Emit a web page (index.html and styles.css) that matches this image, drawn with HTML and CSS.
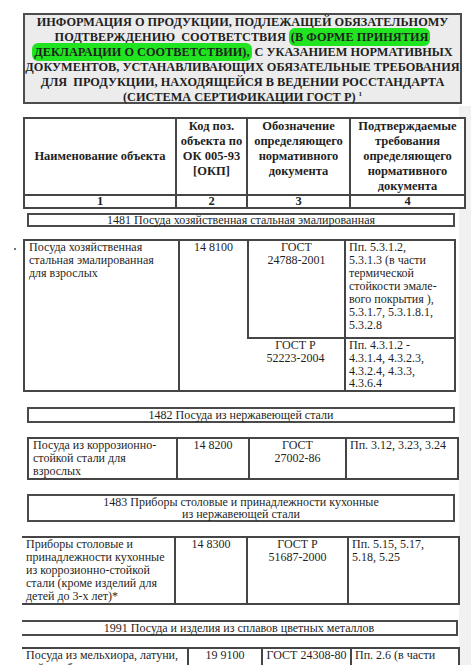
FILE: index.html
```html
<!DOCTYPE html>
<html lang="ru">
<head>
<meta charset="utf-8">
<link rel="stylesheet" href="styles.css">
</head>
<body>
<div class="page">
  <div class="strip"></div>
  <div class="dot"></div>

  <div class="title">
    ИНФОРМАЦИЯ О ПРОДУКЦИИ, ПОДЛЕЖАЩЕЙ ОБЯЗАТЕЛЬНОМУ<br>
    ПОДТВЕРЖДЕНИЮ&nbsp; СООТВЕТСТВИЯ <span class="hl">(В ФОРМЕ ПРИНЯТИЯ</span><br>
    <span class="hl">ДЕКЛАРАЦИИ О СООТВЕТСТВИИ),</span> С УКАЗАНИЕМ НОРМАТИВНЫХ<br>
    ДОКУМЕНТОВ, УСТАНАВЛИВАЮЩИХ ОБЯЗАТЕЛЬНЫЕ ТРЕБОВАНИЯ<br>
    ДЛЯ&nbsp; ПРОДУКЦИИ, НАХОДЯЩЕЙСЯ В ВЕДЕНИИ РОССТАНДАРТА<br>
    (СИСТЕМА СЕРТИФИКАЦИИ ГОСТ Р) <sup>1</sup>
  </div>

  <table class="grid head">
    <colgroup><col class="h1"><col class="h2"><col class="h3"><col class="h4"></colgroup>
    <tr class="hrow">
      <td class="mid">Наименование объекта</td>
      <td>Код поз.<br>объекта по<br>ОК 005-93<br>[ОКП]</td>
      <td>Обозначение<br>определяющего<br>нормативного<br>документа</td>
      <td>Подтверждаемые<br>требования<br>определяющего<br>нормативного<br>документа</td>
    </tr>
    <tr class="nrow">
      <td>1</td><td>2</td><td>3</td><td>4</td>
    </tr>
  </table>

  <div class="group g1481">1481 Посуда хозяйственная стальная эмалированная</div>

  <table class="grid body r1">
    <colgroup><col class="a1"><col class="a2"><col class="a3"><col class="a4"></colgroup>
    <tr class="r1a">
      <td rowspan="2" class="name">Посуда хозяйственная<br>стальная эмалированная<br>для взрослых</td>
      <td rowspan="2" class="c">14 8100</td>
      <td class="c">ГОСТ<br>24788-2001</td>
      <td class="req">Пп. 5.3.1.2,<br>5.3.1.3 (в части<br>термической<br>стойкости эмале-<br>вого покрытия ),<br>5.3.1.7, 5.3.1.8.1,<br>5.3.2.8</td>
    </tr>
    <tr class="r1b">
      <td class="c sub">ГОСТ Р<br>52223-2004</td>
      <td class="req sub">Пп. 4.3.1.2 -<br>4.3.1.4, 4.3.2.3,<br>4.3.2.4, 4.3.3,<br>4.3.6.4</td>
    </tr>
  </table>

  <div class="group g1482">1482 Посуда из нержавеющей стали</div>

  <table class="grid body r2">
    <colgroup><col class="b1"><col class="b2"><col class="b3"><col class="b4"></colgroup>
    <tr>
      <td class="name">Посуда из коррозионно-<br>стойкой стали для<br>взрослых</td>
      <td class="c">14 8200</td>
      <td class="c">ГОСТ<br>27002-86</td>
      <td class="req">Пп. 3.12, 3.23, 3.24</td>
    </tr>
  </table>

  <div class="group g1483">1483 Приборы столовые и принадлежности кухонные<br>из нержавеющей стали</div>

  <table class="grid body open r3">
    <colgroup><col class="d1"><col class="d2"><col class="d3"><col class="d4"></colgroup>
    <tr>
      <td class="name">Приборы столовые и<br>принадлежности кухонные<br>из коррозионно-стойкой<br>стали (кроме изделий для<br>детей до 3-х лет)*</td>
      <td class="c">14 8300</td>
      <td class="c">ГОСТ Р<br>51687-2000</td>
      <td class="req">Пп. 5.15, 5.17,<br>5.18, 5.25</td>
    </tr>
  </table>

  <div class="group open g1991">1991 Посуда и изделия из сплавов цветных металлов</div>

  <table class="grid body open r4">
    <colgroup><col class="e1"><col class="e2"><col class="e3"><col class="e4"></colgroup>
    <tr>
      <td class="name">Посуда из мельхиора, латуни,<br>нейзильбера с хромовым или<br>никелевым покрытием</td>
      <td class="c">19 9100</td>
      <td class="c">ГОСТ 24308-80</td>
      <td class="req">Пп. 2.6 (в части<br>толщины покры-<br>тия)</td>
    </tr>
  </table>
</div>
</body>
</html>
```
FILE: styles.css
```css
html, body {
  margin: 0;
  padding: 0;
  background: #ffffff;
}

body {
  font-family: "Liberation Serif", "Tinos", "Times New Roman", "DejaVu Serif", "Noto Serif", serif;
  color: #1f1f1f;
  font-size: 12px;
}

.page {
  position: relative;
  height: 665px;
  overflow: hidden;
}

.strip {
  position: absolute;
  left: 459px;
  top: 106px;
  bottom: 0;
  width: 12px;
  background: #f1f1f1;
  z-index: 0;
}

.dot {
  position: absolute;
  left: 14px;
  top: 248px;
  width: 2px;
  height: 2px;
  background: #777;
}

.title {
  position: relative;
  z-index: 1;
  box-sizing: border-box;
  margin: 13px 0 0 23px;
  width: 439px;
  height: 91px;
  border: 2px solid #4d4d4d;
  background: #ececec;
  text-align: center;
  font-weight: bold;
  font-size: 12.3px;
  line-height: 15px;
  white-space: nowrap;
}

.title sup {
  font-size: 7px;
  vertical-align: 5px;
  line-height: 0;
}

.hl {
  background: #1fe41f;
  border-radius: 6px;
  padding: 2px 2px;
}

.grid {
  position: relative;
  z-index: 1;
  background: #fff;
  border-collapse: separate;
  border-spacing: 0;
  table-layout: fixed;
  border: 2px solid #454545;
}

.grid td {
  border-left: 2px solid #454545;
  padding: 0;
  vertical-align: top;
}

.grid td:first-child {
  border-left: 0;
}

.grid td[rowspan] + td[rowspan] {
  border-left: 2px solid #454545;
}

/* header table */
.head {
  margin: 13px 0 0 23px;
  width: 439px;
  font-weight: bold;
  font-size: 12.5px;
  line-height: 15px;
  text-align: center;
}

.head .h1 { width: 150px; }
.head .h2 { width: 71px; }
.head .h3 { width: 103px; }
.head .h4 { width: 115px; }

.hrow { height: 75px; }

.head .mid {
  vertical-align: middle;
}

.nrow { height: 13px; }

.nrow td {
  border-top: 2px solid #454545;
  line-height: 11px;
  font-size: 12.5px;
}

/* group captions */
.group {
  position: relative;
  z-index: 1;
  box-sizing: border-box;
  background: #fff;
  border: 2px solid #4a4a4a;
  text-align: center;
  font-size: 12px;
  line-height: 12px;
  margin-left: 27px;
  width: 428px;
}

.group.open {
  border-left: 0;
  margin-left: 22px;
  width: 436px;
}

.g1481 { margin-top: 4px; height: 14px; line-height: 10px; }
.g1482 { margin-top: 15px; height: 16px; }
.g1483 { margin-top: 14px; height: 28px; line-height: 12px; }
.g1991 { margin-top: 15px; height: 16px; }

/* body tables */
.body {
  font-size: 12px;
  line-height: 13px;
}

.body .name {
  padding-left: 4px;
}

.body .req {
  padding-left: 3px;
}

.body .c {
  text-align: center;
}

.body .sub {
  border-top: 2px solid #454545;
  line-height: 12.8px;
}

.grid.open {
  border-left: 0;
}

.r1 {
  margin: 12px 0 0 23px;
  width: 429px;
}
.r1 .a1 { width: 153px; }
.r1 .a2 { width: 69px; }
.r1 .a3 { width: 97px; }
.r1 .a4 { width: 110px; }
.r1a { height: 96px; }
.r1b { height: 53px; }

.r2 {
  margin: 14px 0 0 27px;
  width: 428px;
}
.r2 .b1 { width: 147px; }
.r2 .b2 { width: 72px; }
.r2 .b3 { width: 97px; }
.r2 .b4 { width: 112px; }

.r3 {
  margin: 14px 0 0 22px;
  width: 436px;
}
.r3 .d1 { width: 152px; }
.r3 .d2 { width: 72px; }
.r3 .d3 { width: 101px; }
.r3 .d4 { width: 111px; }

.r4 {
  margin: 11px 0 0 22px;
  width: 436px;
}
.r4 .e1 { width: 165px; }
.r4 .e2 { width: 74px; }
.r4 .e3 { width: 89px; }
.r4 .e4 { width: 108px; }
```
